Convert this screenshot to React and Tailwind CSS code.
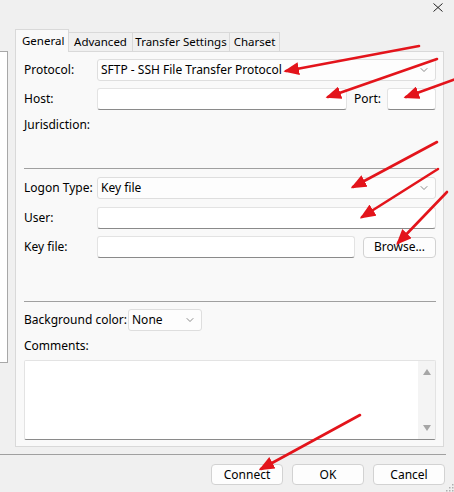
import { ChevronDown } from 'lucide-react'

const font = { fontFamily: '"Noto Sans", "Open Sans", sans-serif' }

function Select({ value, className = '' }) {
    return (
        <div className={`h-[22px] bg-[#fdfdfd] border border-[#dedede] rounded-[3px] flex items-center justify-between pl-[3px] pr-[5px] ${className}`}>
            <span className="text-[12px] text-black">{value}</span>
            <ChevronDown size={12} strokeWidth={1.4} className="text-[#5a5a5a]" />
        </div>
    )
}

function Edit({ className = '' }) {
    return <div className={`h-[22px] bg-white border border-[#e3e3e3] border-b-[#8a8a8a] rounded-[3px] ${className}`} />
}

function Row({ label, children, className = '' }) {
    return (
        <div className={`flex items-center ${className}`}>
            <span className="w-[73px] shrink-0 text-[12px] text-black">{label}</span>
            {children}
        </div>
    )
}

function Btn({ children, className = '' }) {
    return (
        <div className={`h-[21px] bg-[#fdfdfd] border border-[#d2d2d2] rounded-[4px] flex items-center justify-center text-[12px] text-black ${className}`}>
            {children}
        </div>
    )
}

const arrows = [
    [419, 46, 286, 71],
    [437, 59, 328, 97],
    [456, 79, 406, 97],
    [437, 142, 353, 187],
    [438, 169, 362, 217],
    [447, 192, 398, 243],
    [360, 415, 261, 469],
]

export default function App() {
    return (
        <div className="w-[454px] h-[492px] bg-[#f0f0f0] relative overflow-hidden" style={font}>

            {/* TITLE */}
            <div className="h-[29px] flex justify-end pr-[11px] pt-[3px]">
                <svg width="10" height="9" viewBox="0 0 10 9" className="text-[#222]">
                    <path d="M0.5 0.5 L9.5 8.5 M9.5 0.5 L0.5 8.5" stroke="currentColor" strokeWidth="1" />
                </svg>
            </div>

            {/* BODY */}
            <div className="flex items-start">
                <div className="w-[8px] h-[312px] mt-[22px] bg-white border border-l-0 border-[#a8a8a8] shrink-0" />

                <div className="ml-[7px] w-[429px]">
                    {/* TABS */}
                    <div className="flex items-end h-[22px] text-[11.5px] text-black">
                        <div className="w-[54px] h-[23px] -mb-px bg-[#f9f9f9] border border-b-0 border-[#d9d9d9] pl-[6px] pt-[2px] relative z-10">General</div>
                        <div className="w-[64px] h-[19px] border-t border-r border-[#d9d9d9] flex items-center justify-center">Advanced</div>
                        <div className="w-[97px] h-[19px] border-t border-r border-[#d9d9d9] flex items-center justify-center">Transfer Settings</div>
                        <div className="w-[50px] h-[19px] border-t border-r border-[#d9d9d9] flex items-center justify-center">Charset</div>
                    </div>

                    {/* PANEL */}
                    <div className="h-[396px] bg-[#f9f9f9] border border-[#d9d9d9] pt-[7px] pl-[8px] pr-[7px]">
                        <Row label="Protocol:">
                            <Select value="SFTP - SSH File Transfer Protocol" className="flex-1" />
                        </Row>
                        <Row label="Host:" className="mt-[7px]">
                            <Edit className="w-[250px]" />
                            <span className="ml-[7px] w-[33px] text-[12px] text-black">Port:</span>
                            <Edit className="flex-1" />
                        </Row>
                        <div className="mt-[7px] h-[16px] flex items-center text-[12px] text-black">Jurisdiction:</div>

                        <div className="mt-[35px] h-px bg-[#a0a0a0]" />

                        <Row label="Logon Type:" className="mt-[8px]">
                            <Select value="Key file" className="flex-1" />
                        </Row>
                        <Row label="User:" className="mt-[8px]">
                            <Edit className="flex-1" />
                        </Row>
                        <Row label="Key file:" className="mt-[7px]">
                            <Edit className="w-[258px]" />
                            <Btn className="ml-[8px] flex-1">Browse...</Btn>
                        </Row>

                        <div className="mt-[43px] h-px bg-[#a0a0a0]" />

                        <div className="mt-[7px] flex items-center">
                            <span className="w-[104px] text-[12px] text-black">Background color:</span>
                            <Select value="None" className="w-[74px]" />
                        </div>
                        <div className="mt-[7px] h-[16px] flex items-center text-[12px] text-black">Comments:</div>

                        <div className="mt-[6px] h-[80px] bg-white border border-[#e3e3e3] border-b-[#8a8a8a] rounded-[2px] flex justify-end">
                            <div className="w-[17px] bg-[#f4f4f4] flex flex-col items-center justify-between py-[8px]">
                                <svg width="8" height="6" viewBox="0 0 8 6"><path d="M4 0 L8 6 L0 6 Z" fill="#a6a6a6" /></svg>
                                <svg width="8" height="6" viewBox="0 0 8 6"><path d="M0 0 L8 0 L4 6 Z" fill="#a6a6a6" /></svg>
                            </div>
                        </div>
                    </div>
                </div>
            </div>

            {/* FOOTER */}
            <div className="mt-[7px] w-[446px] h-px bg-[#a0a0a0]" />
            <div className="mt-[9px] flex justify-end gap-[9px] pr-[9px]">
                <Btn className="w-[72px]">Connect</Btn>
                <Btn className="w-[72px]">OK</Btn>
                <Btn className="w-[72px]">Cancel</Btn>
            </div>

            {/* size grip */}
            <svg className="absolute right-0 bottom-0" width="9" height="9" viewBox="0 0 9 9">
                {[[7, 1], [7, 4], [4, 4], [7, 7], [4, 7], [1, 7]].map(([x, y], i) => (
                    <rect key={i} x={x} y={y} width="1.5" height="1.5" fill="#b0b0b0" />
                ))}
            </svg>

            {/* ANNOTATION ARROWS */}
            <svg className="absolute inset-0 pointer-events-none" width="454" height="492" viewBox="0 0 454 492">
                <defs>
                    <marker id="head" markerWidth="6" markerHeight="5" refX="5" refY="2.5" orient="auto" markerUnits="strokeWidth">
                        <path d="M0 0 L6 2.5 L0 5 Z" fill="#e3141b" />
                    </marker>
                </defs>
                {arrows.map(([x1, y1, x2, y2], i) => (
                    <line key={i} x1={x1} y1={y1} x2={x2} y2={y2} stroke="#e3141b" strokeWidth="2.6" strokeLinecap="round" markerEnd="url(#head)" />
                ))}
            </svg>
        </div>
    )
}
